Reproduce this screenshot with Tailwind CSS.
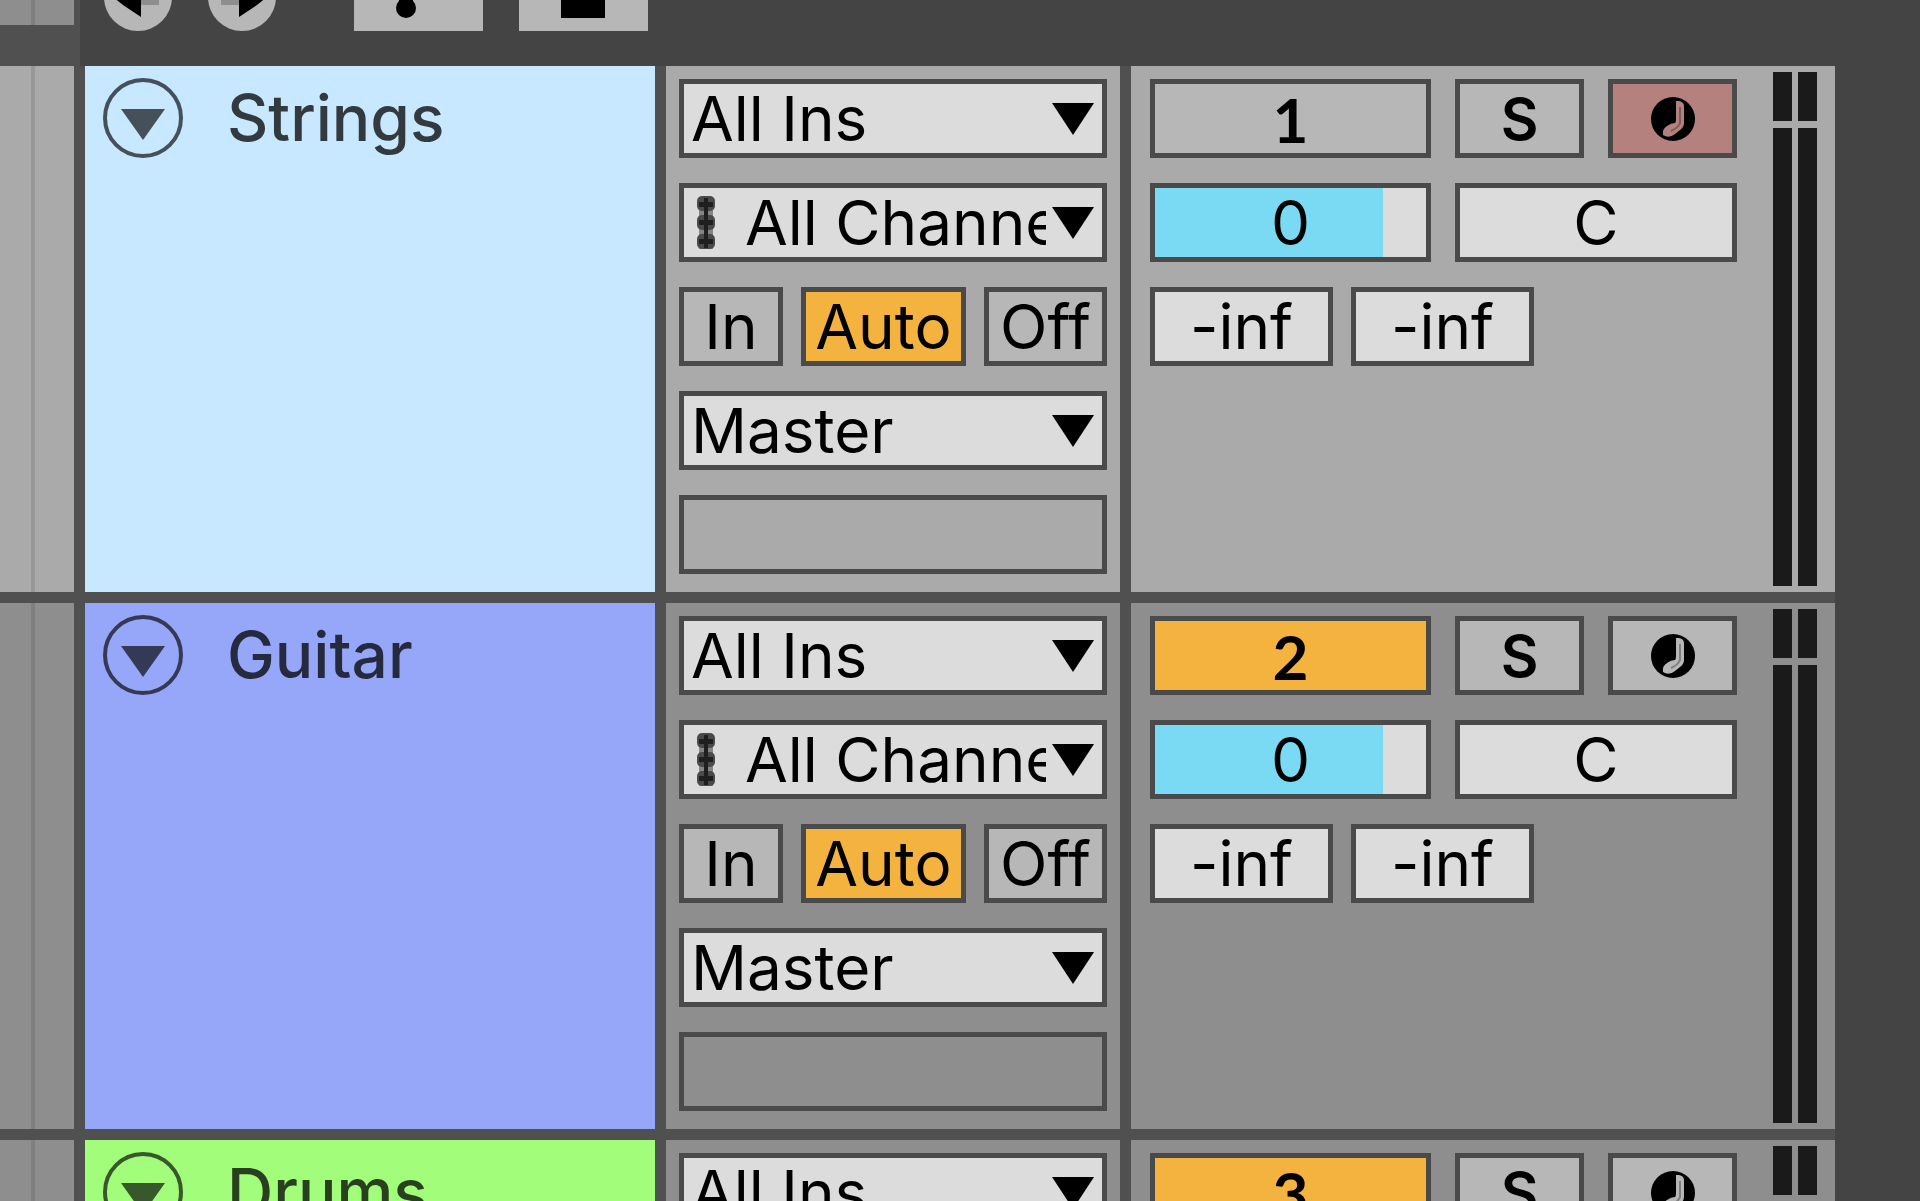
<!DOCTYPE html>
<html lang="en">
<head>
  <meta charset="UTF-8" />
  <meta name="viewport" content="width=device-width, initial-scale=1.0" />
  <title>Arrangement - Track Mixer</title>
  <script src="https://cdn.jsdelivr.net/npm/@tailwindcss/browser@4"></script>
</head>
<body class="h-screen overflow-hidden bg-[#444444] font-['Inter',sans-serif] text-[62px] leading-[68px] text-black">

  <!-- Toolbar -->
  <header class="flex h-[66px] items-start">
    <div class="h-full w-20 shrink-0 bg-[#505050]">
      <div class="flex h-[25px] w-[74px] bg-[#8e8e8e]">
        <div class="ml-[31px] w-1 bg-[#7f7f7f]"></div>
      </div>
    </div>
    <div class="ml-6 flex h-[31px] items-end overflow-hidden">
      <button aria-label="Previous locator" class="mr-9 size-[68px] shrink-0 rounded-full bg-[#b7b7b7]">
        <svg viewBox="0 0 68 68" class="size-full"><path d="M37 29h18v13H37z" fill="#8e8e8e" /><path d="M9 34 37 12v42L19 42Z" /></svg>
      </button>
      <button aria-label="Next locator" class="mr-[78px] size-[68px] shrink-0 rounded-full bg-[#b7b7b7]">
        <svg viewBox="0 0 68 68" class="size-full"><path d="M13 29h18v13H13z" fill="#8e8e8e" /><path d="M59 34 31 12v42L49 42Z" /></svg>
      </button>
      <button aria-label="Draw mode" class="mr-9 flex h-[79px] w-[129px] shrink-0 bg-[#b7b7b7]">
        <svg viewBox="0 0 129 79" class="size-full"><circle cx="52" cy="56" r="10" /><path d="M45 20h14v34H45z" /></svg>
      </button>
      <button aria-label="Stop" class="flex h-[79px] w-[129px] shrink-0 bg-[#b7b7b7]">
        <svg viewBox="0 0 129 79" class="size-full"><path d="M42 22h44v44H42z" /></svg>
      </button>
    </div>
  </header>

  <!-- Tracks -->
  <main id="tracks" class="mr-[85px] flex flex-col gap-[11px] bg-[#505050]"></main>

  <script>
    const tracks = [
      { name: 'Strings', number: 1, color: 'bg-[#c7e8fe]', row: 'bg-[#aaaaaa]', line: 'bg-[#989898]', active: 'bg-[#b7b7b7]', arm: 'bg-[#b5817e]', note: 'fill-[#b5817e]' },
      { name: 'Guitar', number: 2, color: 'bg-[#96a7fa]', row: 'bg-[#8e8e8e]', line: 'bg-[#7f7f7f]', active: 'bg-[#f4b33f]', arm: 'bg-[#b7b7b7]', note: 'fill-[#b7b7b7]' },
      { name: 'Drums', number: 3, color: 'bg-[#a2fd7a]', row: 'bg-[#8e8e8e]', line: 'bg-[#7f7f7f]', active: 'bg-[#f4b33f]', arm: 'bg-[#b7b7b7]', note: 'fill-[#b7b7b7]' },
    ];

    const box = 'block h-[79px] border-5 border-[#4a4a4a] rounded-none';

    const arrow = `
      <svg viewBox="0 0 42 32" class="pointer-events-none absolute top-6 right-[13px] h-8 w-[42px]"><path d="M0 0h42L21 32Z" /></svg>`;

    function select(label, value, icon = '') {
      const pad = icon ? 'pl-[61px]' : 'pl-[7px]';
      return `
        <div class="relative">
          <select aria-label="${label}" class="${box} ${pad} w-full appearance-none bg-[#dcdcdc] pr-[56px]">
            <option>${value}</option>
          </select>
          ${icon}${arrow}
        </div>`;
    }

    const midi = `
      <svg viewBox="0 0 18 56" class="pointer-events-none absolute top-3 left-[18px] h-14 w-[18px]">
        <rect x="2" y="2" width="14" height="52" fill="#858585" />
        <g fill="#4a4a4a">
          <rect y="1" width="18" height="15" rx="5" />
          <rect y="20" width="18" height="15" rx="5" />
          <rect y="39" width="18" height="15" rx="5" />
        </g>
        <path d="M2 7h14v5H2zM2 25h14v5H2zM2 44h14v5H2zM7 3h4v50H7z" fill="#1f1f1f" />
      </svg>`;

    const meter = `
      <div class="flex w-[19px] flex-col gap-[7px]">
        <div class="h-[49px] bg-[#1a1a1a]"></div>
        <div class="flex-1 bg-[#1a1a1a]"></div>
      </div>`;

    document.getElementById('tracks').innerHTML = tracks.map(t => `
      <section class="flex h-[526px] shrink-0 gap-[11px]" aria-label="${t.name}">
        <div class="flex w-[74px] shrink-0 ${t.row}">
          <div class="ml-[31px] w-1 ${t.line}"></div>
        </div>

        <div class="flex min-w-0 flex-1 items-start gap-11 pt-3 pl-[18px] ${t.color}">
          <button aria-label="Fold ${t.name}" class="size-20 shrink-0 opacity-65">
            <svg viewBox="0 0 80 80" class="size-full">
              <circle cx="40" cy="40" r="38" fill="none" stroke="#000" stroke-width="4" />
              <path d="M18 31h44L40 62Z" />
            </svg>
          </button>
          <h2 class="flex h-20 items-center text-[64px] font-medium text-black/75">${t.name}</h2>
        </div>

        <!-- Inputs and outputs -->
        <div class="flex w-[454px] shrink-0 flex-col gap-[25px] pt-[13px] pr-[13px] pl-[13px] ${t.row}">
          ${select('Input type', 'All Ins')}
          ${select('Input channel', 'All Channels', midi)}
          <div class="flex gap-[18px]">
            <button class="${box} w-[104px] bg-[#b7b7b7]">In</button>
            <button class="${box} flex-1 bg-[#f4b33f]">Auto</button>
            <button class="${box} w-[123px] bg-[#b7b7b7]">Off</button>
          </div>
          ${select('Output type', 'Master')}
          <select aria-label="Output channel" disabled class="${box} w-full appearance-none"></select>
        </div>

        <!-- Mixer -->
        <div class="flex w-[704px] shrink-0 justify-between pr-[18px] pl-[19px] ${t.row}">
          <div class="flex flex-col gap-[25px] pt-[13px]">
            <div class="flex gap-6">
              <button class="${box} w-[281px] font-['Lato',sans-serif] font-bold ${t.active}">${t.number}</button>
              <button class="${box} w-[129px] text-[58px] font-semibold bg-[#b7b7b7]">S</button>
              <button aria-label="Arm" class="${box} flex w-[129px] items-center justify-center ${t.arm}">
                <svg viewBox="0 0 44 44" class="size-11">
                  <circle cx="22" cy="22" r="22" />
                  <path d="M25 4h3q5 1 5 5v17q0 4-4 7l-5 4q-6 5-12 1-1-6 4-9 4-3 8-3 1-1 1-4Z" class="${t.note}" />
                  <path d="M29 10v16q-2 5-9 8" fill="none" stroke="#000" stroke-opacity=".3" stroke-width="2" />
                </svg>
              </button>
            </div>
            <div class="flex gap-6">
              <input type="text" aria-label="Volume" value="0" class="${box} w-[281px] bg-linear-to-r from-[#7adaf3] from-84% to-[#dcdcdc] to-84% text-center" />
              <input type="text" aria-label="Pan" value="C" class="${box} w-[282px] bg-[#dcdcdc] text-center" />
            </div>
            <div class="flex gap-[18px]">
              <input type="text" aria-label="Send A" value="-inf" class="${box} w-[183px] bg-[#dcdcdc] text-center" />
              <input type="text" aria-label="Send B" value="-inf" class="${box} w-[183px] bg-[#dcdcdc] text-center" />
            </div>
          </div>
          <div class="flex gap-1.5 py-1.5">
            ${meter}
            ${meter}
          </div>
        </div>
      </section>`).join('');
  </script>
</body>
</html>
